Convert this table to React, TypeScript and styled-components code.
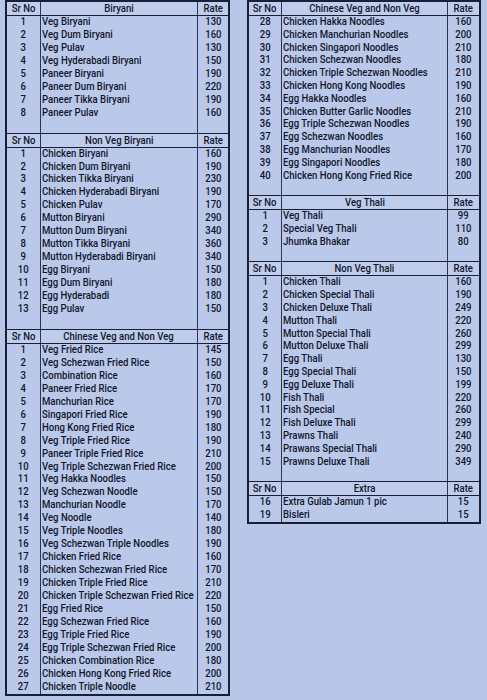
import React, { FC } from "react";
import styled, { createGlobalStyle } from "styled-components";

type Item = [number, string, number];
type Section = { title: string; items: Item[] };

const leftMenu: Section[] = [
  {
    title: "Biryani",
    items: [
      [1, "Veg Biryani", 130],
      [2, "Veg Dum Biryani", 160],
      [3, "Veg Pulav", 130],
      [4, "Veg Hyderabadi Biryani", 150],
      [5, "Paneer Biryani", 190],
      [6, "Paneer Dum Biryani", 220],
      [7, "Paneer Tikka Biryani", 190],
      [8, "Paneer Pulav", 160],
    ],
  },
  {
    title: "Non Veg Biryani",
    items: [
      [1, "Chicken Biryani", 160],
      [2, "Chicken Dum Biryani", 190],
      [3, "Chicken Tikka Biryani", 230],
      [4, "Chicken Hyderabadi Biryani", 190],
      [5, "Chicken Pulav", 170],
      [6, "Mutton Biryani", 290],
      [7, "Mutton Dum Biryani", 340],
      [8, "Mutton Tikka Biryani", 360],
      [9, "Mutton Hyderabadi Biryani", 340],
      [10, "Egg Biryani", 150],
      [11, "Egg Dum Biryani", 180],
      [12, "Egg Hyderabadi", 180],
      [13, "Egg Pulav", 150],
    ],
  },
  {
    title: "Chinese Veg and Non Veg",
    items: [
      [1, "Veg Fried Rice", 145],
      [2, "Veg Schezwan Fried Rice", 150],
      [3, "Combination Rice", 160],
      [4, "Paneer Fried Rice", 170],
      [5, "Manchurian Rice", 170],
      [6, "Singapori Fried Rice", 190],
      [7, "Hong Kong Fried Rice", 180],
      [8, "Veg Triple Fried Rice", 190],
      [9, "Paneer Triple Fried Rice", 210],
      [10, "Veg Triple Schezwan Fried Rice", 200],
      [11, "Veg Hakka Noodles", 150],
      [12, "Veg Schezwan Noodle", 150],
      [13, "Manchurian Noodle", 170],
      [14, "Veg Noodle", 140],
      [15, "Veg Triple Noodles", 180],
      [16, "Veg Schezwan Triple Noodles", 190],
      [17, "Chicken Fried Rice", 160],
      [18, "Chicken Schezwan Fried Rice", 170],
      [19, "Chicken Triple Fried Rice", 210],
      [20, "Chicken Triple Schezwan Fried Rice", 220],
      [21, "Egg Fried Rice", 150],
      [22, "Egg Schezwan Fried Rice", 160],
      [23, "Egg Triple Fried Rice", 190],
      [24, "Egg Triple Schezwan Fried Rice", 200],
      [25, "Chicken Combination Rice", 180],
      [26, "Chicken Hong Kong Fried Rice", 200],
      [27, "Chicken Triple Noodle", 210],
    ],
  },
];

const rightMenu: Section[] = [
  {
    title: "Chinese Veg and Non Veg",
    items: [
      [28, "Chicken Hakka Noodles", 160],
      [29, "Chicken Manchurian Noodles", 200],
      [30, "Chicken Singapori Noodles", 210],
      [31, "Chicken Schezwan Noodles", 180],
      [32, "Chicken Triple Schezwan Noodles", 210],
      [33, "Chicken Hong Kong Noodles", 190],
      [34, "Egg Hakka Noodles", 160],
      [35, "Chicken Butter Garlic Noodles", 210],
      [36, "Egg Triple Schezwan Noodles", 190],
      [37, "Egg Schezwan Noodles", 160],
      [38, "Egg Manchurian Noodles", 170],
      [39, "Egg Singapori Noodles", 180],
      [40, "Chicken Hong Kong Fried Rice", 200],
    ],
  },
  {
    title: "Veg Thali",
    items: [
      [1, "Veg Thali", 99],
      [2, "Special Veg Thali", 110],
      [3, "Jhumka Bhakar", 80],
    ],
  },
  {
    title: "Non Veg Thali",
    items: [
      [1, "Chicken Thali", 160],
      [2, "Chicken Special Thali", 190],
      [3, "Chicken Deluxe Thali", 249],
      [4, "Mutton Thali", 220],
      [5, "Mutton Special Thali", 260],
      [6, "Mutton Deluxe Thali", 299],
      [7, "Egg Thali", 130],
      [8, "Egg Special Thali", 150],
      [9, "Egg Deluxe Thali", 199],
      [10, "Fish Thali", 220],
      [11, "Fish Special", 260],
      [12, "Fish Deluxe Thali", 299],
      [13, "Prawns Thali", 240],
      [14, "Prawans Special Thali", 290],
      [15, "Prawns Deluxe Thali", 349],
    ],
  },
  {
    title: "Extra",
    items: [
      [16, "Extra Gulab Jamun 1 pic", 15],
      [19, "Bisleri", 15],
    ],
  },
];

const GlobalStyle = createGlobalStyle`
  html, body {
    margin: 0;
    padding: 0;
    background: #b8c6e8;
  }
  body {
    font-family: Roboto, "Noto Sans", sans-serif;
    color: #12172c;
  }
`;

const Page = styled.div`
  display: flex;
  align-items: flex-start;
  gap: 17px;
  width: 487px;
  height: 700px;
  padding: 0 6px 0 5px;
  box-sizing: border-box;
  background: #b8c6e8;
`;

const Board = styled.div<{ $width: number }>`
  width: ${(p) => p.$width}px;
  flex: none;
  box-sizing: border-box;
  border: 2px solid #182038;
  background: #bac8ea;
`;

const Row = styled.div<{ $cols: string; $h: number }>`
  display: grid;
  grid-template-columns: ${(p) => p.$cols};
  height: ${(p) => p.$h}px;
  line-height: ${(p) => p.$h}px;
  font-size: 11px;
  font-weight: 500;
`;

const HeadRow = styled(Row)<{ $first?: boolean }>`
  height: 13px;
  line-height: 13px;
  border-top: ${(p) => (p.$first ? "none" : "1.5px solid #182038")};
  border-bottom: 1.5px solid #182038;
  background: #bfccec;
`;

const Cell = styled.div<{ $align?: "left" | "center" }>`
  border-right: 1px solid #2a3352;
  text-align: ${(p) => p.$align ?? "center"};
  padding-left: ${(p) => (p.$align === "left" ? "1px" : "0")};
  white-space: nowrap;
  overflow: hidden;
  &:last-child {
    border-right: none;
  }
`;

/* the printed menu uses a narrow face; squeeze Roboto to match */
const Text = styled.span<{ $origin?: string }>`
  display: inline-block;
  transform: scaleX(0.87);
  transform-origin: ${(p) => p.$origin ?? "center"};
`;

const MenuBoard: FC<{
  sections: Section[];
  cols: string;
  width: number;
  rowH: number;
}> = ({ sections, cols, width, rowH }) => (
  <Board $width={width}>
    {sections.map((section, i) => (
      <React.Fragment key={section.title + i}>
        <HeadRow $cols={cols} $h={13} $first={i === 0}>
          <Cell>
            <Text>Sr No</Text>
          </Cell>
          <Cell>
            <Text>{section.title}</Text>
          </Cell>
          <Cell>
            <Text>Rate</Text>
          </Cell>
        </HeadRow>
        {section.items.map(([no, name, rate]) => (
          <Row $cols={cols} $h={rowH} key={no + name}>
            <Cell>
              <Text>{no}</Text>
            </Cell>
            <Cell $align="left">
              <Text $origin="left">{name}</Text>
            </Cell>
            <Cell>
              <Text>{rate}</Text>
            </Cell>
          </Row>
        ))}
        {i < sections.length - 1 && (
          <Row $cols={cols} $h={rowH}>
            <Cell />
            <Cell />
            <Cell />
          </Row>
        )}
      </React.Fragment>
    ))}
  </Board>
);

const App: FC = () => (
  <>
    <GlobalStyle />
    <Page>
      <MenuBoard sections={leftMenu} cols="34px 157px 1fr" width={225} rowH={12.96} />
      <MenuBoard sections={rightMenu} cols="33px 166px 1fr" width={234} rowH={12.8} />
    </Page>
  </>
);

export default App;
